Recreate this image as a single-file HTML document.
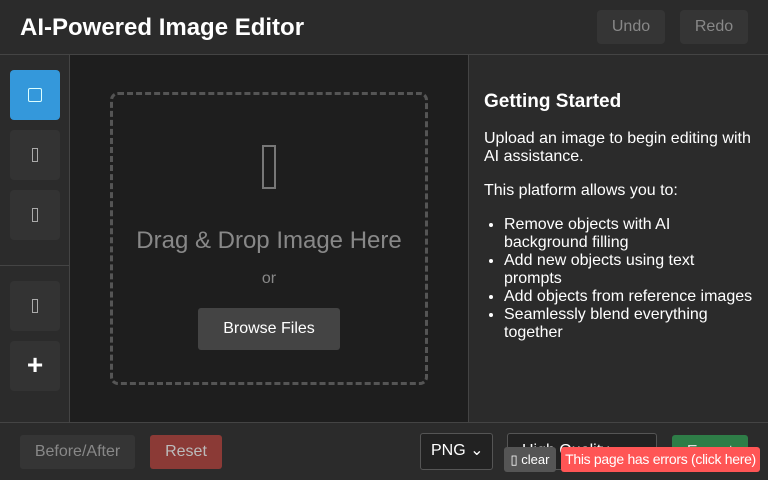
<!DOCTYPE html>
<html><head><style>
*{box-sizing:border-box;margin:0;padding:0}
body{width:768px;height:480px;overflow:hidden;background:#2b2b2b;font-family:"Liberation Sans",sans-serif;color:#fff;position:relative}
.hdr{position:absolute;left:0;top:0;width:768px;height:55px;background:#2b2b2b;border-bottom:1px solid #444}
.hdr h1{position:absolute;left:20px;top:14px;font-size:24px;font-weight:bold}
.hb{position:absolute;top:10px;height:34px;background:#353535;color:#888;font-size:16px;line-height:34px;text-align:center;border-radius:4px}
.side{position:absolute;left:0;top:55px;width:70px;height:367px;border-right:1px solid #444}
.tb{position:absolute;left:10px;width:50px;height:50px;background:#333;border-radius:4px;text-align:center}
.tofu{display:inline-block;border:1px solid #aaa;width:6px;height:14px;margin-top:18px}
.sep{position:absolute;left:0;top:210px;width:69px;border-top:1px solid #444}
.canvas{position:absolute;left:70px;top:55px;width:398px;height:367px;background:#1e1e1e}
.drop{position:absolute;left:40px;top:37px;width:318px;height:293px;border:3px dashed #555;border-radius:8px;text-align:center}
.right{position:absolute;left:468px;top:55px;width:300px;height:367px;border-left:1px solid #444;padding:36px 15px;font-size:16px;line-height:18px}
.right h2{font-size:19px;margin-bottom:19px;margin-top:2px}
.right p{margin-bottom:16px}
.right ul{padding-left:20px}
.foot{position:absolute;left:0;top:422px;width:768px;height:58px;border-top:1px solid #444}
.fb{position:absolute;top:12px;height:34px;line-height:34px;font-size:16px;text-align:center;border-radius:3px}
</style></head><body>
<div class="hdr"><h1>AI-Powered Image Editor</h1>
<div class="hb" style="left:597px;width:68px">Undo</div>
<div class="hb" style="left:680px;width:68px">Redo</div></div>
<div class="side">
<div class="tb" style="top:15px;background:#3498db"><span style="display:inline-block;width:14px;height:14px;border:1.5px solid #dff;border-radius:2px;margin-top:18px"></span></div>
<div class="tb" style="top:75px"><span class="tofu"></span></div>
<div class="tb" style="top:135px"><span class="tofu"></span></div>
<div class="sep"></div>
<div class="tb" style="top:226px"><span class="tofu"></span></div>
<div class="tb" style="top:286px;font-size:28px;line-height:48px;font-weight:bold">+</div>
</div>
<div class="canvas"><div class="drop">
<span style="display:inline-block;width:14px;height:44px;border:2px solid #777;margin-top:50px"></span>
<div style="font-size:24px;color:#888;margin-top:33px">Drag &amp; Drop Image Here</div>
<div style="font-size:16px;color:#888;margin-top:15px">or</div>
<div style="display:inline-block;margin-top:20px;width:142px;height:42px;line-height:42px;background:#444;border-radius:3px;font-size:16px">Browse Files</div>
</div></div>
<div class="right"><h2>Getting Started</h2>
<p>Upload an image to begin editing with AI assistance.</p>
<p>This platform allows you to:</p>
<ul><li>Remove objects with AI background filling</li><li>Add new objects using text prompts</li><li>Add objects from reference images</li><li>Seamlessly blend everything together</li></ul></div>
<div class="foot">
<div class="fb" style="left:20px;width:115px;background:#353535;color:#888">Before/After</div>
<div class="fb" style="left:150px;width:72px;background:#8b3a36;color:#bbb">Reset</div>
<div class="fb" style="left:420px;width:73px;top:10px;height:37px;border:1px solid #555;background:#222;color:#fff;padding-left:10px;text-align:left">PNG &#8964;</div>
<div class="fb" style="left:507px;width:150px;top:10px;height:37px;border:1px solid #555;background:#222;color:#fff;text-align:left;padding-left:14px">High Quality</div>
<div class="fb" style="left:672px;width:76px;background:#2e7d47;color:#ddd">Export</div>
</div>
<div style="position:absolute;left:504px;top:447px;width:52px;height:25px;background:#555;border-radius:3px;font-size:13px;line-height:25px;text-align:center;white-space:nowrap">▯ clear</div>
<div style="position:absolute;left:561px;top:447px;width:199px;height:25px;background:#f55;border-radius:3px;font-size:14px;letter-spacing:-0.3px;line-height:25px;text-align:center;white-space:nowrap;overflow:hidden">This page has errors (click here)</div>
</body></html>
